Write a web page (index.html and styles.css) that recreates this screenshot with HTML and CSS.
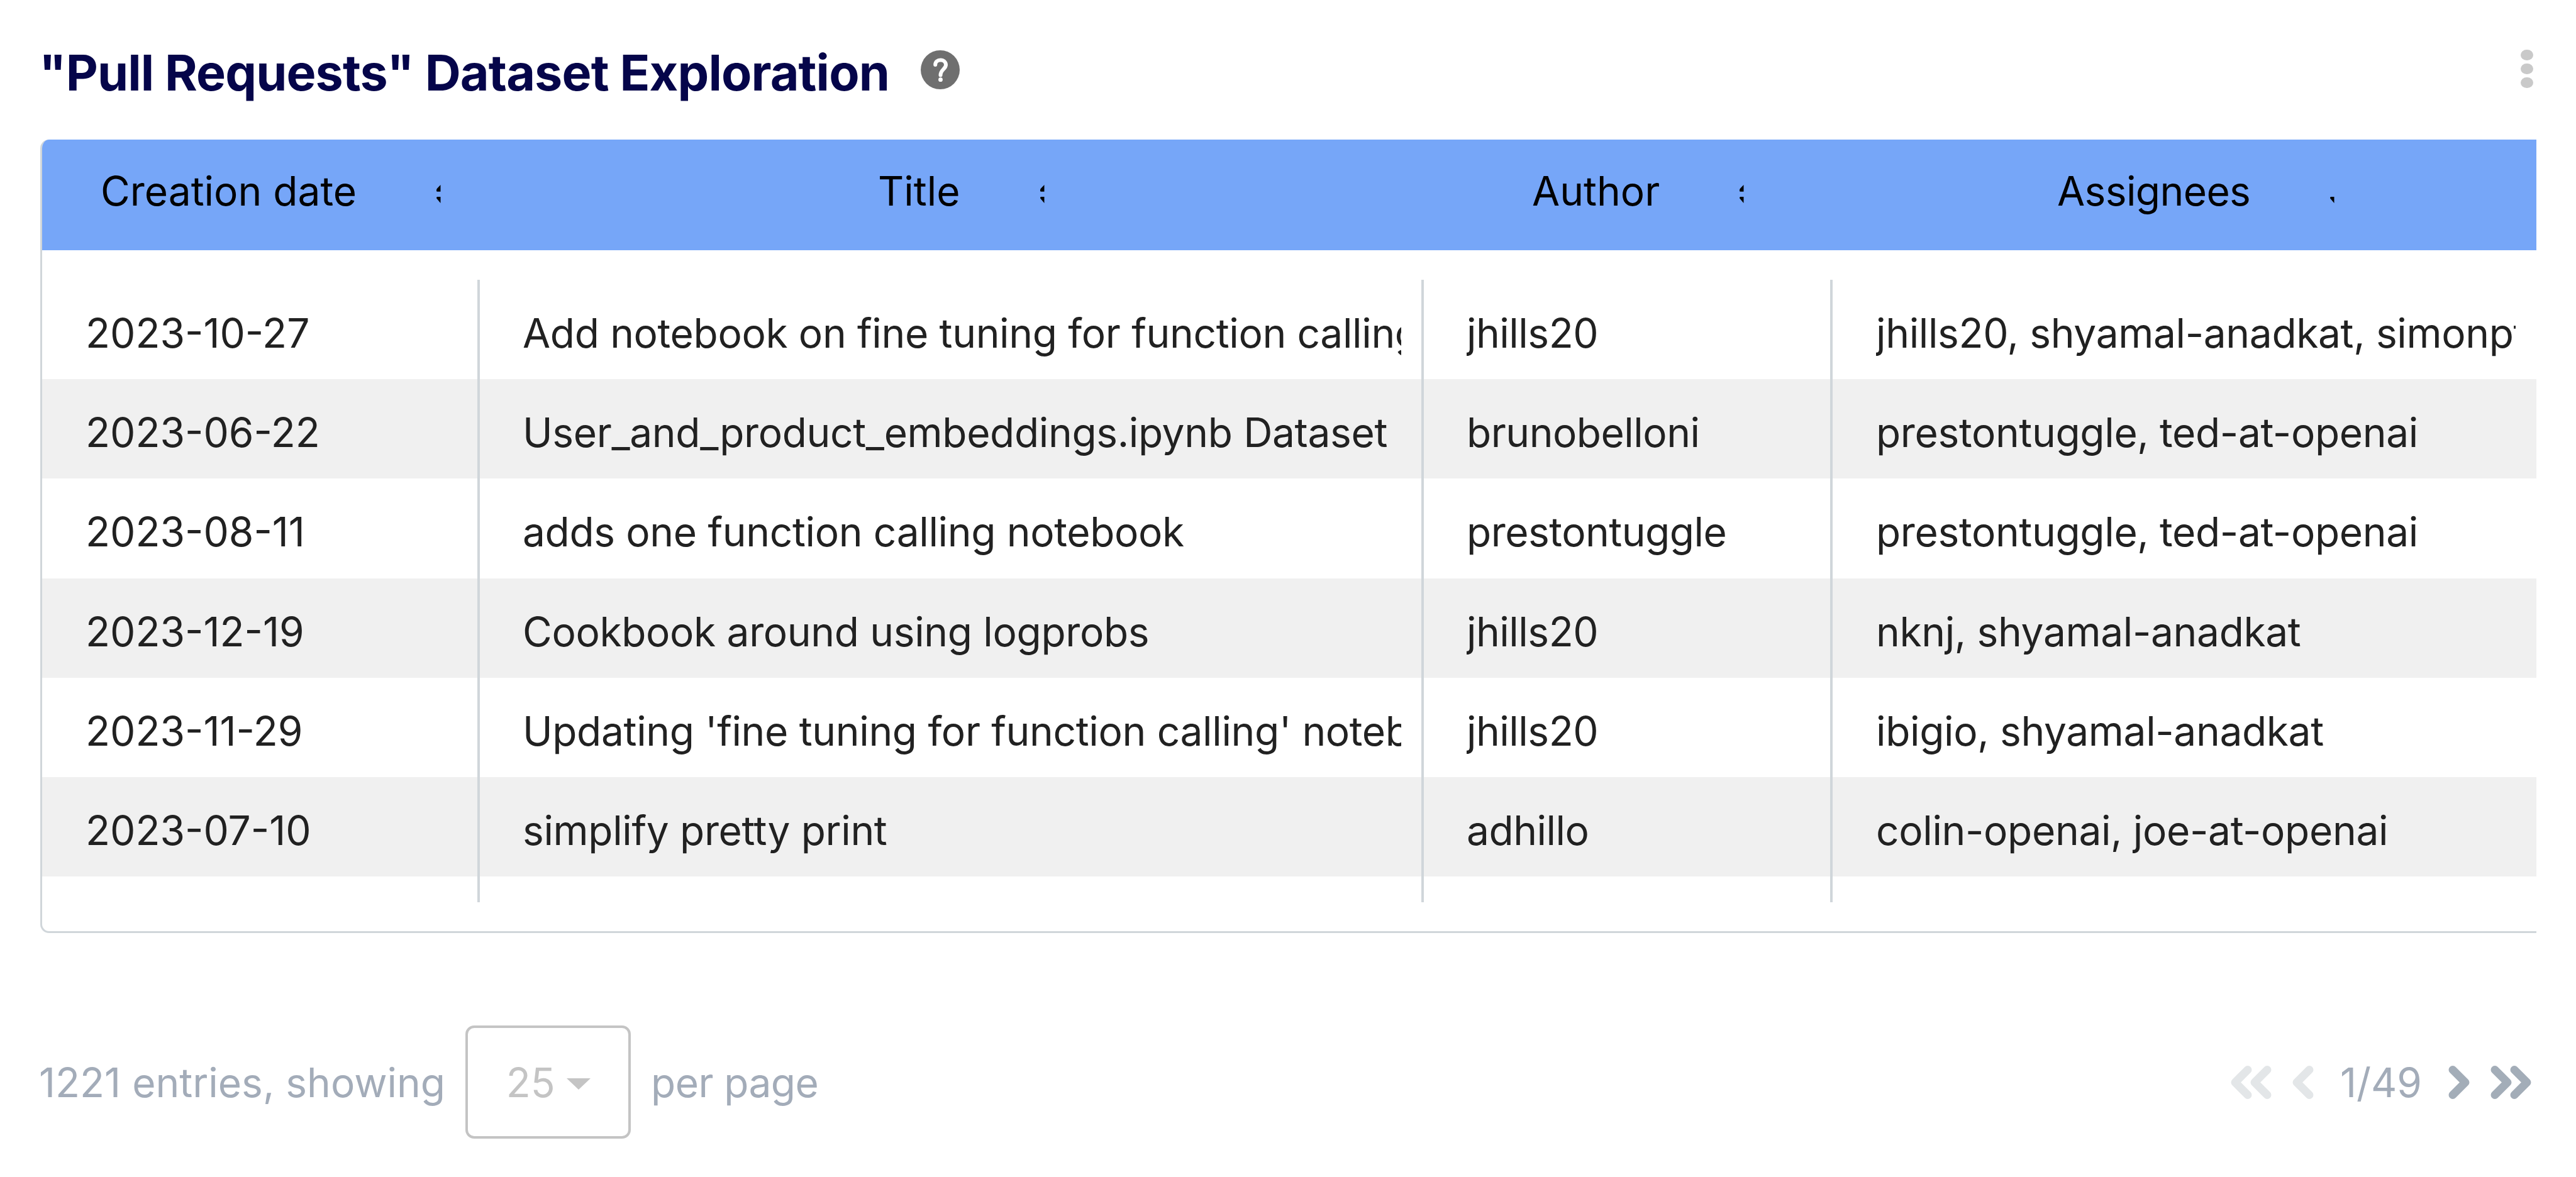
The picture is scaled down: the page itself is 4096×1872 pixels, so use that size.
FILE: index.html
```html
<!DOCTYPE html>
<html lang="en">
<head>
<meta charset="utf-8">
<title>Pull Requests Dataset Exploration</title>
<link rel="stylesheet" href="styles.css">
</head>
<body>
<svg class="defs" width="0" height="0" aria-hidden="true">
  <symbol id="sort" viewBox="0 0 7 29"><path d="M6.5 0L.8 6Q0 7 0 8.5V9.5Q0 10.8 1.5 10.8H6.5Z"/><path d="M1.5 19H6.5V29L1 22.5Q0 21.5 0 20.5Q0 19 1.5 19Z"/></symbol>
  <symbol id="sort-down" viewBox="0 0 7 29"><path d="M1.5 19H6.5V29L1 22.5Q0 21.5 0 20.5Q0 19 1.5 19Z"/></symbol>
  <symbol id="chev-l" viewBox="0 0 35 53"><path d="M28 6.5L8 26.5L28 46.5"/></symbol>
  <symbol id="chev-r" viewBox="0 0 35 53"><path d="M7 6.5L27 26.5L7 46.5"/></symbol>
</svg>
<main class="page">
  <header class="title-row">
    <h1 class="title">"Pull Requests" Dataset Exploration</h1>
    <svg class="help" viewBox="0 0 62 62" role="img" aria-label="Help">
      <circle class="help-disc" cx="31" cy="31" r="31"/>
      <path class="help-mark" d="M23.2 23C23.2 18.5 26.8 15.5 31.5 15.5C36.4 15.5 40 18.8 40 23.2C40 29.5 31.5 31 31.5 39.5"/>
      <circle class="help-dot" cx="31.5" cy="46.7" r="3.4"/>
    </svg>
    <span class="kebab"><i></i><i></i><i></i></span>
  </header>

  <section class="table">
    <div class="thead">
      <div class="th th-date"><span>Creation date</span><svg class="sort"><use href="#sort"/></svg></div>
      <div class="th th-title"><span>Title</span><svg class="sort"><use href="#sort"/></svg></div>
      <div class="th th-author"><span>Author</span><svg class="sort"><use href="#sort"/></svg></div>
      <div class="th th-assign"><span>Assignees</span><svg class="sort"><use href="#sort-down"/></svg></div>
    </div>
    <div class="tbody">
      <div class="col col-date">
        <div class="td"><span>2023-10-27</span></div>
        <div class="td"><span>2023-06-22</span></div>
        <div class="td"><span>2023-08-11</span></div>
        <div class="td"><span>2023-12-19</span></div>
        <div class="td"><span>2023-11-29</span></div>
        <div class="td"><span>2023-07-10</span></div>
      </div>
      <div class="col col-title">
        <div class="td"><span>Add notebook on fine tuning for function calling</span></div>
        <div class="td"><span>User_and_product_embeddings.ipynb Dataset</span></div>
        <div class="td"><span>adds one function calling notebook</span></div>
        <div class="td"><span>Cookbook around using logprobs</span></div>
        <div class="td"><span>Updating 'fine tuning for function calling' notebook</span></div>
        <div class="td"><span>simplify pretty print</span></div>
      </div>
      <div class="col col-author">
        <div class="td"><span>jhills20</span></div>
        <div class="td"><span>brunobelloni</span></div>
        <div class="td"><span>prestontuggle</span></div>
        <div class="td"><span>jhills20</span></div>
        <div class="td"><span>jhills20</span></div>
        <div class="td"><span>adhillo</span></div>
      </div>
      <div class="col col-assign">
        <div class="td"><span>jhills20, shyamal-anadkat, simonpfish</span></div>
        <div class="td"><span>prestontuggle, ted-at-openai</span></div>
        <div class="td"><span>prestontuggle, ted-at-openai</span></div>
        <div class="td"><span>nknj, shyamal-anadkat</span></div>
        <div class="td"><span>ibigio, shyamal-anadkat</span></div>
        <div class="td"><span>colin-openai, joe-at-openai</span></div>
      </div>
    </div>
  </section>

  <footer class="footer">
    <span>1221 entries, showing</span>
    <span class="select"><span>25</span><i class="caret"></i></span>
    <span class="per">per page</span>
    <nav class="pager">
      <span class="pair off"><svg class="chev"><use href="#chev-l"/></svg><svg class="chev"><use href="#chev-l"/></svg></span>
      <svg class="chev off"><use href="#chev-l"/></svg>
      <span class="count">1/49</span>
      <svg class="chev"><use href="#chev-r"/></svg>
      <span class="pair"><svg class="chev"><use href="#chev-r"/></svg><svg class="chev"><use href="#chev-r"/></svg></span>
    </nav>
  </footer>
</main>
</body>
</html>
```
FILE: styles.css
```css
* { box-sizing: border-box; }
html, body { margin: 0; background: #fff; }
body { font-family: Inter, "Liberation Sans", sans-serif; overflow: hidden; }
.defs { position: absolute; }
.page { width: 4096px; height: 1872px; padding: 0 63px 0 64px; }

.title-row { display: flex; align-items: center; height: 222px; padding-bottom: 4px; }
.title { margin: 12px 0 0 -2px; font-size: 79px; font-weight: 700; letter-spacing: -0.9px; color: #05054a; line-height: 1; }
.help { flex: none; width: 62px; height: 62px; margin: 3px 0 0 50px; }
.help-disc { fill: #6f6f6f; }
.help-mark { fill: none; stroke: #fff; stroke-width: 6; stroke-linecap: round; }
.help-dot { fill: #fff; }
.kebab { display: flex; flex-direction: column; gap: 4.5px; margin: 1px 5px 0 auto; }
.kebab i { display: block; width: 20px; height: 17.5px; border-radius: 50%; background: #c9c9c9; }

.table { height: 1262px; border: solid #d0d6da; border-width: 0 0 3px 3px; border-radius: 14px 0 0 14px; overflow: hidden; }
.thead { display: grid; grid-template-columns: 694px 1501px 650px 1124px; height: 176px; margin-left: -3px; background: #76a6f8; font-size: 64px; color: #000; }
.th { display: flex; align-items: center; }
.th span { margin-top: -12px; line-height: 1; }
.th-date { padding-left: 96px; }
.th-title { padding-left: 638px; }
.th-author { padding-left: 177px; }
.th-assign { padding-left: 362px; letter-spacing: -0.6px; }
.sort { width: 7px; height: 29px; margin: -3px 0 0 127px; fill: #000; }

.tbody { display: grid; grid-template-columns: 699px 1501px 650px 1119px; margin-left: -3px; padding-top: 47px; font-size: 64px; color: #212121; }
.col { padding-bottom: 41px; border-right: 4px solid #d0d6da; }
.col:last-child { border-right: 0; }
.td { height: 158.2px; padding-top: 12px; line-height: 146.2px; white-space: nowrap; }
.td span { display: block; overflow: hidden; }
.td:nth-child(even) { background: #f0f0f0; }
.col-date .td { padding-left: 72px; }
.col-title .td { padding-left: 68px; padding-right: 32px; letter-spacing: -0.35px; }
.col-author .td { padding-left: 68px; letter-spacing: -0.5px; }
.col-assign .td { padding-left: 69px; padding-right: 33px; letter-spacing: -0.35px; }

.footer { display: flex; align-items: center; gap: 32px; margin: 147px 0 0 -2px; height: 180px; font-size: 64px; color: #a3acb9; }
.select { display: flex; align-items: center; justify-content: center; gap: 18px; width: 263px; height: 180px; border: 4px solid #c4c4c4; border-radius: 14px; color: #c4c4c4; }
.caret { width: 0; height: 0; margin-top: 6px; border: solid transparent; border-width: 18px 19px 0; border-top-color: #c4c4c4; }
.per { letter-spacing: -0.6px; }
.pager { display: flex; align-items: center; gap: 0; margin-left: auto; padding-right: 7px; }
.pair { display: flex; }
.pair .chev + .chev { margin-left: -4px; }
.chev { width: 35px; height: 53px; fill: none; stroke: #a3adb8; stroke-width: 13; stroke-linecap: round; stroke-linejoin: round; }
.off .chev, .chev.off { stroke: #e3e6e8; }
.pager .chev.off { margin-left: 32px; }
.count { margin: 0 42px; }
.pager > .pair:last-child { margin-left: 32px; }
```
